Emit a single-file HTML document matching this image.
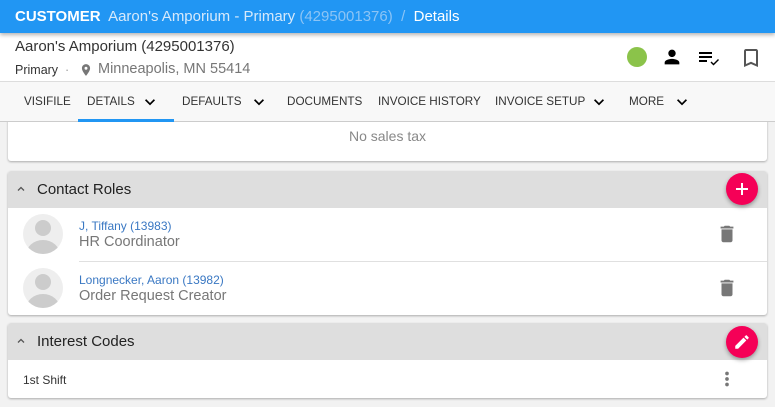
<!DOCTYPE html>
<html><head><style>
*{margin:0;padding:0;box-sizing:border-box}
body{width:775px;height:407px;overflow:hidden;background:#f2f2f2;font-family:"Liberation Sans",sans-serif;position:relative}
.abs{position:absolute}
.top{left:0;top:0;width:775px;height:33px;background:#2196f3;box-shadow:0 2px 4px rgba(0,0,0,.3);z-index:3;font-size:15px;line-height:33px;padding-left:15px;color:#fff}
.hdr{left:0;top:33px;width:775px;height:49px;background:#fff;border-bottom:1px solid #ddd;z-index:2}
.tabs{left:0;top:82px;width:775px;height:40px;background:#f8f8f8;border-bottom:1px solid #ccc;font-size:11.7px;color:#333;z-index:2}
.tab{position:absolute;top:13px}
.chev{position:absolute;top:10px}
.card{position:absolute;left:8px;width:759px;background:#fff;border-radius:3px;box-shadow:0 1px 2px rgba(0,0,0,.3)}
.ch{position:absolute;left:0;top:0;width:100%;height:37px;background:#dedede;border-radius:3px 3px 0 0;font-size:15px;color:#222;line-height:37px;padding-left:29px}
.fab{position:absolute;width:32px;height:32px;border-radius:50%;background:#f50057;box-shadow:0 2px 4px rgba(0,0,0,.35)}
.av{position:absolute;left:15px;width:40px;height:40px;border-radius:50%;background:#eee;overflow:hidden}
.av:before{content:"";position:absolute;left:12px;top:6px;width:16px;height:16px;border-radius:50%;background:#ccc}
.av:after{content:"";position:absolute;left:3px;top:26px;width:34px;height:30px;border-radius:50%;background:#ccc}
.nm{position:absolute;left:71px;font-size:12px;color:#3a78c3}
.rl{position:absolute;left:71px;font-size:14.5px;color:#777}
</style></head><body>
<div class="abs top"><b>CUSTOMER</b>&nbsp; <span style="color:#d6e9fb">Aaron's Amporium - Primary</span> <span style="color:#8cc4f5">(4295001376)</span> <span style="color:#8cc4f5">&nbsp;/&nbsp;</span> Details</div>
<div class="abs hdr">
 <div class="abs" style="left:15px;top:5px;font-size:15px;color:#333">Aaron's Amporium (4295001376)</div>
 <div class="abs" style="left:15px;top:30px;font-size:12.5px;color:#333">Primary <span style="color:#999">&nbsp;·&nbsp;</span></div>
 <svg class="abs" style="left:79px;top:28px" width="14" height="18" viewBox="0 0 24 24"><path fill="#777" d="M12 2C8.1 2 5 5.1 5 9c0 5.2 7 13 7 13s7-7.8 7-13c0-3.9-3.1-7-7-7zm0 9.5a2.5 2.5 0 110-5 2.5 2.5 0 010 5z"/></svg>
 <div class="abs" style="left:98px;top:28px;font-size:14.5px;color:#777">Minneapolis, MN 55414</div>
 <div class="abs" style="left:627px;top:14px;width:20px;height:20px;border-radius:50%;background:#8bc34a"></div>
 <svg class="abs" style="left:661px;top:13px" width="22" height="22" viewBox="0 0 24 24"><path d="M12 12c2.2 0 4-1.8 4-4s-1.8-4-4-4-4 1.8-4 4 1.8 4 4 4zm0 2c-2.7 0-8 1.3-8 4v2h16v-2c0-2.7-5.3-4-8-4z"/></svg>
 <svg class="abs" style="left:697px;top:13px" width="24" height="24" viewBox="0 0 24 24"><path d="M2 6h13v2H2zm0 4h13v2H2zm0 4h8v2H2zm12.5 1.5l2 2 4.5-4.5 1 1-5.5 5.5-3-3z"/></svg>
 <svg class="abs" style="left:739px;top:13px" width="24" height="24" viewBox="0 0 24 24"><path fill="#555" d="M17 3H7c-1.1 0-2 .9-2 2v16l7-3 7 3V5c0-1.1-.9-2-2-2zm0 15l-5-2.2L7 18V5h10v13z"/></svg>
</div>
<div class="abs tabs">
 <span class="tab" style="left:24px">VISIFILE</span>
 <span class="tab" style="left:87px">DETAILS</span><svg class="chev" style="left:140px" width="20" height="20" viewBox="0 0 24 24"><path d="M7.4 8.6L12 13.2l4.6-4.6L18 10l-6 6-6-6z"/></svg>
 <div class="abs" style="left:78px;top:37px;width:96px;height:3px;background:#2196f3"></div>
 <span class="tab" style="left:182px">DEFAULTS</span><svg class="chev" style="left:249px" width="20" height="20" viewBox="0 0 24 24"><path d="M7.4 8.6L12 13.2l4.6-4.6L18 10l-6 6-6-6z"/></svg>
 <span class="tab" style="left:287px">DOCUMENTS</span>
 <span class="tab" style="left:378px">INVOICE HISTORY</span>
 <span class="tab" style="left:495px">INVOICE SETUP</span><svg class="chev" style="left:589px" width="20" height="20" viewBox="0 0 24 24"><path d="M7.4 8.6L12 13.2l4.6-4.6L18 10l-6 6-6-6z"/></svg>
 <span class="tab" style="left:629px">MORE</span><svg class="chev" style="left:672px" width="20" height="20" viewBox="0 0 24 24"><path d="M7.4 8.6L12 13.2l4.6-4.6L18 10l-6 6-6-6z"/></svg>
</div>
<div class="card" style="top:110px;height:51px;z-index:0"><div class="abs" style="left:0;width:100%;top:18px;text-align:center;font-size:14px;color:#888">No sales tax</div></div>

<div class="card" style="top:171px;height:144px">
 <div class="ch"><svg class="abs" style="left:8px;top:13px" width="10" height="10" viewBox="0 0 10 10"><path d="M2 6.5L5 3.5 8 6.5" fill="none" stroke="#555" stroke-width="1.3"/></svg>Contact Roles</div>
 <div class="av" style="top:43px"></div>
 <div class="nm" style="top:48px">J, Tiffany (13983)</div>
 <div class="rl" style="top:63px">HR Coordinator</div>
 <div class="abs" style="left:71px;top:90px;width:688px;height:1px;background:#e0e0e0"></div>
 <div class="av" style="top:97px"></div>
 <div class="nm" style="top:102px">Longnecker, Aaron (13982)</div>
 <div class="rl" style="top:117px">Order Request Creator</div>
 <svg class="abs" style="left:708px;top:52px" width="22" height="22" viewBox="0 0 24 24"><path fill="#777" d="M6 19c0 1.1.9 2 2 2h8c1.1 0 2-.9 2-2V7H6zM19 4h-3.5l-1-1h-5l-1 1H5v2h14z"/></svg>
 <svg class="abs" style="left:708px;top:106px" width="22" height="22" viewBox="0 0 24 24"><path fill="#777" d="M6 19c0 1.1.9 2 2 2h8c1.1 0 2-.9 2-2V7H6zM19 4h-3.5l-1-1h-5l-1 1H5v2h14z"/></svg>
</div>
<div class="fab" style="left:726px;top:173px"><svg class="abs" style="left:8px;top:8px" width="16" height="16" viewBox="0 0 16 16"><path d="M8 2v12M2 8h12" stroke="#fff" stroke-width="2"/></svg></div>

<div class="card" style="top:323px;height:75px">
 <div class="ch"><svg class="abs" style="left:8px;top:13px" width="10" height="10" viewBox="0 0 10 10"><path d="M2 6.5L5 3.5 8 6.5" fill="none" stroke="#555" stroke-width="1.3"/></svg>Interest Codes</div>
 <div class="abs" style="left:15px;top:50px;font-size:12px;color:#333">1st Shift</div>
 <svg class="abs" style="left:708px;top:45px" width="22" height="22" viewBox="0 0 24 24"><circle cx="12" cy="6" r="2" fill="#777"/><circle cx="12" cy="12" r="2" fill="#777"/><circle cx="12" cy="18" r="2" fill="#777"/></svg>
</div>
<div class="fab" style="left:726px;top:326px"><svg class="abs" style="left:7px;top:7px" width="18" height="18" viewBox="0 0 24 24"><path fill="#fff" d="M3 17.2V21h3.8L17.8 9.9l-3.8-3.8zM20.7 7c.4-.4.4-1 0-1.4l-2.3-2.3c-.4-.4-1-.4-1.4 0l-1.8 1.8 3.8 3.8z"/></svg></div>
</body></html>
